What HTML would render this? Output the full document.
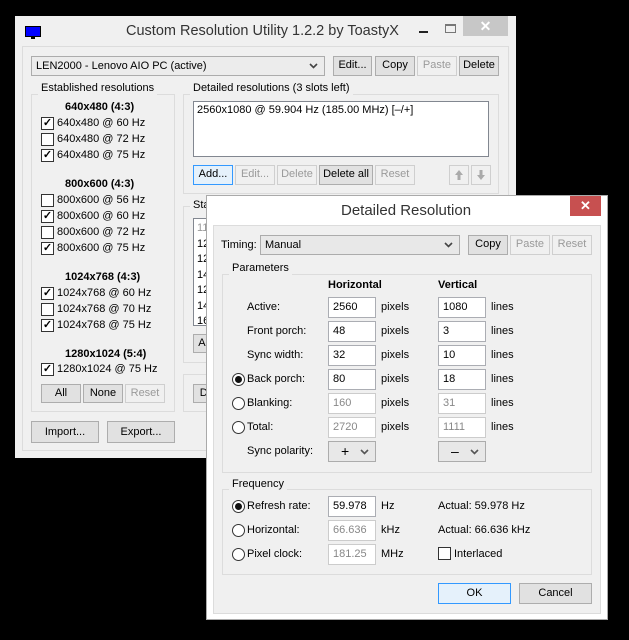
<!DOCTYPE html>
<html><head><meta charset="utf-8">
<style>
*{margin:0;padding:0;box-sizing:border-box}
body{width:629px;height:640px;background:#000;position:relative;overflow:hidden;font-family:"Liberation Sans",sans-serif;font-size:11px;color:#000}
.a{position:absolute;white-space:nowrap}
.win{background:#f0f0f0}
.frame{border:1px solid #dcdcdc}
.btn{position:absolute;background:#e1e1e1;border:1px solid #adadad;text-align:center;line-height:17px}
.dis{color:#9a9a9a;border-color:#cfcfcf;background:#f0f0f0}
.grp{position:absolute;border:1px solid #dcdcdc}
.gl{position:absolute;background:#f0f0f0;padding:0 3px;white-space:nowrap;line-height:13px}
.cb{position:absolute;width:13px;height:13px;border:1px solid #333;background:#fff;font-size:11px;line-height:11px;text-align:center;font-weight:bold}
.in{position:absolute;width:48px;height:21px;border:1px solid #abadb3;background:#fff;padding-left:4px;line-height:19px}
.in.g{color:#888;border-color:#ccc}
.rd{position:absolute;width:13px;height:13px;border:1px solid #333;border-radius:50%;background:#fff}
.rd.on::after{content:"";position:absolute;left:2px;top:2px;width:7px;height:7px;border-radius:50%;background:#111}
.combo{position:absolute;background:#e8e8e8;border:1px solid #acacac;padding-left:4px;line-height:18px}
.chev{position:absolute;right:6px;top:6px;width:9px;height:6px}
</style></head><body>

<!-- main window -->
<div class="a win" style="left:15px;top:16px;width:501px;height:442px"></div>
<div class="a" style="left:25px;top:26px;width:16px;height:11px;background:#0000ff;border:1px solid #000"></div>
<div class="a" style="left:31px;top:37px;width:4px;height:2px;background:#000"></div>
<div class="a" style="left:126px;top:23px;font-size:14.5px;color:#333">Custom Resolution Utility 1.2.2 by ToastyX</div>
<div class="a" style="left:419px;top:31px;width:9px;height:2px;background:#222"></div>
<div class="a" style="left:445px;top:24px;width:11px;height:9px;border:1px solid #777;border-top-width:2px"></div>
<div class="a" style="left:463px;top:16px;width:45px;height:20px;background:#c7c7c7;color:#fff;text-align:center;font-size:14px;line-height:20px;font-weight:bold">✕</div>
<div class="a frame" style="left:22px;top:46px;width:487px;height:405px"></div>

<div class="combo" style="left:31px;top:56px;width:294px;height:20px;background:#ececec">LEN2000 - Lenovo AIO PC (active)<svg class="chev" viewBox="0 0 9 6"><path d="M1 1L4.5 4.5L8 1" stroke="#444" stroke-width="1.6" fill="none"/></svg></div>
<div class="btn" style="left:333px;top:56px;width:39px;height:20px">Edit...</div>
<div class="btn" style="left:375px;top:56px;width:40px;height:20px">Copy</div>
<div class="btn dis" style="left:417px;top:56px;width:40px;height:20px">Paste</div>
<div class="btn" style="left:459px;top:56px;width:40px;height:20px">Delete</div>

<div class="grp" style="left:31px;top:94px;width:144px;height:318px"></div>
<div class="gl" style="left:38px;top:82px">Established resolutions</div>
<div class="a" style="left:65px;top:101px;font-weight:bold">640x480 (4:3)</div>
<div class="cb" style="left:41px;top:117px">✓</div><div class="a" style="left:57px;top:117px">640x480 @ 60 Hz</div>
<div class="cb" style="left:41px;top:133px"></div><div class="a" style="left:57px;top:133px">640x480 @ 72 Hz</div>
<div class="cb" style="left:41px;top:149px">✓</div><div class="a" style="left:57px;top:149px">640x480 @ 75 Hz</div>
<div class="a" style="left:65px;top:178px;font-weight:bold">800x600 (4:3)</div>
<div class="cb" style="left:41px;top:194px"></div><div class="a" style="left:57px;top:194px">800x600 @ 56 Hz</div>
<div class="cb" style="left:41px;top:210px">✓</div><div class="a" style="left:57px;top:210px">800x600 @ 60 Hz</div>
<div class="cb" style="left:41px;top:226px"></div><div class="a" style="left:57px;top:226px">800x600 @ 72 Hz</div>
<div class="cb" style="left:41px;top:242px">✓</div><div class="a" style="left:57px;top:242px">800x600 @ 75 Hz</div>
<div class="a" style="left:65px;top:271px;font-weight:bold">1024x768 (4:3)</div>
<div class="cb" style="left:41px;top:287px">✓</div><div class="a" style="left:57px;top:287px">1024x768 @ 60 Hz</div>
<div class="cb" style="left:41px;top:303px"></div><div class="a" style="left:57px;top:303px">1024x768 @ 70 Hz</div>
<div class="cb" style="left:41px;top:319px">✓</div><div class="a" style="left:57px;top:319px">1024x768 @ 75 Hz</div>
<div class="a" style="left:65px;top:348px;font-weight:bold">1280x1024 (5:4)</div>
<div class="cb" style="left:41px;top:363px">✓</div><div class="a" style="left:57px;top:363px">1280x1024 @ 75 Hz</div>
<div class="btn" style="left:41px;top:384px;width:40px;height:19px">All</div>
<div class="btn" style="left:83px;top:384px;width:40px;height:19px">None</div>
<div class="btn dis" style="left:125px;top:384px;width:40px;height:19px">Reset</div>

<div class="btn" style="left:31px;top:421px;width:68px;height:22px;line-height:20px">Import...</div>
<div class="btn" style="left:107px;top:421px;width:68px;height:22px;line-height:20px">Export...</div>

<div class="grp" style="left:183px;top:94px;width:316px;height:100px"></div>
<div class="gl" style="left:190px;top:82px">Detailed resolutions (3 slots left)</div>
<div class="a" style="left:193px;top:101px;width:296px;height:56px;background:#fff;border:1px solid #828790;padding:2px 3px">2560x1080 @ 59.904 Hz (185.00 MHz) [–/+]</div>
<div class="btn" style="left:193px;top:165px;width:40px;height:20px;border-color:#3399ff;background:#e5f1fb">Add...</div>
<div class="btn dis" style="left:235px;top:165px;width:40px;height:20px">Edit...</div>
<div class="btn dis" style="left:277px;top:165px;width:40px;height:20px">Delete</div>
<div class="btn" style="left:319px;top:165px;width:54px;height:20px">Delete all</div>
<div class="btn dis" style="left:375px;top:165px;width:40px;height:20px">Reset</div>
<div class="btn dis" style="left:449px;top:165px;width:20px;height:20px"><svg width="10" height="12" viewBox="0 0 10 12" style="margin-top:3px"><path d="M5 1L9 6H6.5V11H3.5V6H1Z" fill="#aaa"/></svg></div>
<div class="btn dis" style="left:471px;top:165px;width:20px;height:20px"><svg width="10" height="12" viewBox="0 0 10 12" style="margin-top:3px"><path d="M5 11L9 6H6.5V1H3.5V6H1Z" fill="#aaa"/></svg></div>

<div class="grp" style="left:183px;top:206px;width:60px;height:157px"></div>
<div class="gl" style="left:190px;top:199px">Standard</div>
<div class="a" style="left:193px;top:218px;width:40px;height:108px;background:#fff;border:1px solid #828790;padding:2px 3px;line-height:15.5px">
<span style="color:#999">11</span><br>12<br>12<br>14<br>12<br>14<br>16</div>
<div class="btn" style="left:193px;top:334px;width:30px;height:19px">Add</div>
<div class="grp" style="left:183px;top:374px;width:60px;height:38px"></div>
<div class="btn" style="left:193px;top:384px;width:30px;height:19px">Del</div>

<!-- dialog -->
<div class="a" style="left:206px;top:195px;width:402px;height:425px;background:#fff;border:1px solid #aaa"></div>
<div class="a" style="left:213px;top:225px;width:388px;height:389px;background:#f0f0f0;border:1px solid #dcdcdc"></div>
<div class="a" style="left:341px;top:202px;font-size:15px;color:#333">Detailed Resolution</div>
<div class="a" style="left:570px;top:196px;width:31px;height:20px;background:#c75050;color:#fff;text-align:center;font-size:13px;line-height:20px;font-weight:bold">✕</div>

<div class="a" style="left:221px;top:239px">Timing:</div>
<div class="combo" style="left:260px;top:235px;width:200px;height:20px">Manual<svg class="chev" viewBox="0 0 9 6"><path d="M1 1L4.5 4.5L8 1" stroke="#444" stroke-width="1.6" fill="none"/></svg></div>
<div class="btn" style="left:468px;top:235px;width:40px;height:20px">Copy</div>
<div class="btn dis" style="left:510px;top:235px;width:40px;height:20px">Paste</div>
<div class="btn dis" style="left:552px;top:235px;width:40px;height:20px">Reset</div>

<div class="grp" style="left:222px;top:274px;width:370px;height:199px"></div>
<div class="gl" style="left:229px;top:262px">Parameters</div>
<div class="a" style="left:328px;top:279px;font-weight:bold">Horizontal</div>
<div class="a" style="left:438px;top:279px;font-weight:bold">Vertical</div>

<div class="a" style="left:247px;top:301px">Active:</div>
<div class="in" style="left:328px;top:297px">2560</div><div class="a" style="left:381px;top:301px">pixels</div>
<div class="in" style="left:438px;top:297px">1080</div><div class="a" style="left:491px;top:301px">lines</div>

<div class="a" style="left:247px;top:325px">Front porch:</div>
<div class="in" style="left:328px;top:321px">48</div><div class="a" style="left:381px;top:325px">pixels</div>
<div class="in" style="left:438px;top:321px">3</div><div class="a" style="left:491px;top:325px">lines</div>

<div class="a" style="left:247px;top:349px">Sync width:</div>
<div class="in" style="left:328px;top:345px">32</div><div class="a" style="left:381px;top:349px">pixels</div>
<div class="in" style="left:438px;top:345px">10</div><div class="a" style="left:491px;top:349px">lines</div>

<div class="rd on" style="left:232px;top:373px"></div><div class="a" style="left:247px;top:373px">Back porch:</div>
<div class="in" style="left:328px;top:369px">80</div><div class="a" style="left:381px;top:373px">pixels</div>
<div class="in" style="left:438px;top:369px">18</div><div class="a" style="left:491px;top:373px">lines</div>

<div class="rd" style="left:232px;top:397px"></div><div class="a" style="left:247px;top:397px">Blanking:</div>
<div class="in g" style="left:328px;top:393px">160</div><div class="a" style="left:381px;top:397px">pixels</div>
<div class="in g" style="left:438px;top:393px">31</div><div class="a" style="left:491px;top:397px">lines</div>

<div class="rd" style="left:232px;top:421px"></div><div class="a" style="left:247px;top:421px">Total:</div>
<div class="in g" style="left:328px;top:417px">2720</div><div class="a" style="left:381px;top:421px">pixels</div>
<div class="in g" style="left:438px;top:417px">1111</div><div class="a" style="left:491px;top:421px">lines</div>

<div class="a" style="left:247px;top:445px">Sync polarity:</div>
<div class="combo" style="left:328px;top:441px;width:48px;height:21px;padding-left:12px;font-size:14px">+<svg class="chev" style="top:7px" viewBox="0 0 9 6"><path d="M1 1L4.5 4.5L8 1" stroke="#555" stroke-width="1.6" fill="none"/></svg></div>
<div class="combo" style="left:438px;top:441px;width:48px;height:21px;padding-left:12px;font-size:14px">–<svg class="chev" style="top:7px" viewBox="0 0 9 6"><path d="M1 1L4.5 4.5L8 1" stroke="#555" stroke-width="1.6" fill="none"/></svg></div>

<div class="grp" style="left:222px;top:489px;width:370px;height:86px"></div>
<div class="gl" style="left:229px;top:478px">Frequency</div>
<div class="rd on" style="left:232px;top:500px"></div><div class="a" style="left:247px;top:500px">Refresh rate:</div>
<div class="in" style="left:328px;top:496px">59.978</div><div class="a" style="left:381px;top:500px">Hz</div>
<div class="a" style="left:438px;top:500px">Actual: 59.978 Hz</div>
<div class="rd" style="left:232px;top:524px"></div><div class="a" style="left:247px;top:524px">Horizontal:</div>
<div class="in g" style="left:328px;top:520px">66.636</div><div class="a" style="left:381px;top:524px">kHz</div>
<div class="a" style="left:438px;top:524px">Actual: 66.636 kHz</div>
<div class="rd" style="left:232px;top:548px"></div><div class="a" style="left:247px;top:548px">Pixel clock:</div>
<div class="in g" style="left:328px;top:544px">181.25</div><div class="a" style="left:381px;top:548px">MHz</div>
<div class="cb" style="left:438px;top:547px;border-color:#333"></div><div class="a" style="left:454px;top:548px">Interlaced</div>

<div class="btn" style="left:438px;top:583px;width:73px;height:21px;line-height:19px;border-color:#3399ff;background:#e5f1fb">OK</div>
<div class="btn" style="left:519px;top:583px;width:73px;height:21px;line-height:19px">Cancel</div>
</body></html>
